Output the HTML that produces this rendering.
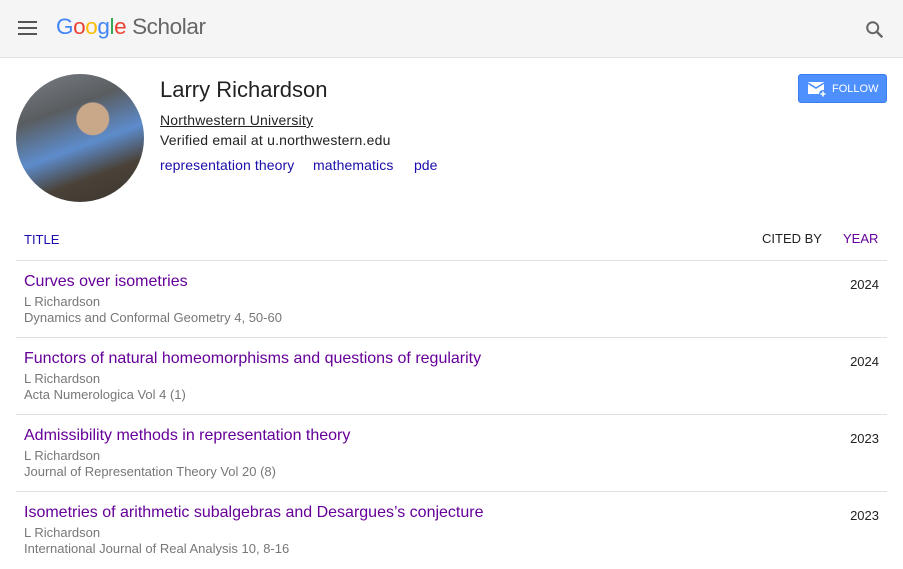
<!DOCTYPE html>
<html><head><meta charset="utf-8"><style>
body{margin:0;width:903px;height:555px;overflow:hidden;background:#fff;font-family:"Liberation Sans",Arial,sans-serif;position:relative}
.hdr{position:absolute;left:0;top:0;width:903px;height:57px;background:#f5f5f5;border-bottom:1px solid #e0e0e0}
.abs{position:absolute;white-space:nowrap}
a{text-decoration:none}
.row{position:absolute;left:16px;width:871px;height:77px;border-top:1px solid #e0e0e0}
.t{position:absolute;left:8px;top:12px;font-size:16px;color:#660099}
.a{position:absolute;left:8px;top:33px;font-size:13px;color:#777}
.v{position:absolute;left:8px;top:49px;font-size:13px;color:#777}
.y{position:absolute;right:8px;top:16px;font-size:13px;color:#222}
</style></head><body>
<div class="hdr">
<div class="abs" style="left:18px;top:21px;width:19px;height:2px;background:#555;box-shadow:0 6px 0 #555,0 12px 0 #555"></div>
<div class="abs" style="left:56px;top:14px;font-size:22.5px;letter-spacing:-0.4px"><span style="color:#4285f4">G</span><span style="color:#ea4335">o</span><span style="color:#fbbc05">o</span><span style="color:#4285f4">g</span><span style="color:#34a853">l</span><span style="color:#ea4335">e</span> <span style="color:#666">Scholar</span></div>
<svg class="abs" style="left:864px;top:19px" width="22" height="22" viewBox="0 0 24 24"><circle cx="9.5" cy="9.5" r="6" fill="none" stroke="#666" stroke-width="2.2"/><path d="M14 14l6 6" stroke="#666" stroke-width="2.6"/></svg>
</div>
<div class="abs" style="left:16px;top:74px;width:128px;height:128px;border-radius:50%;background:radial-gradient(circle at 60% 35%,#c9a88a 0 14%,transparent 15%),linear-gradient(160deg,#7a8088 0%,#5a5d60 30%,#5d8ccc 55%,#4a4238 75%,#3a3530 100%)"></div>
<div class="abs" style="left:160px;top:77px;font-size:22px;color:#222">Larry Richardson</div>
<div class="abs" style="left:160px;top:112px;font-size:14px;color:#222;text-decoration:underline;letter-spacing:0.2px">Northwestern University</div>
<div class="abs" style="left:160px;top:132px;font-size:14px;color:#222;letter-spacing:0.2px">Verified email at u.northwestern.edu</div>
<div class="abs" style="left:160px;top:157px;font-size:14px;color:#1a0dab;letter-spacing:0.1px">representation theory</div>
<div class="abs" style="left:313px;top:157px;font-size:14px;color:#1a0dab;letter-spacing:0.1px">mathematics</div>
<div class="abs" style="left:414px;top:157px;font-size:14px;color:#1a0dab">pde</div>
<div class="abs" style="left:798px;top:74px;width:89px;height:29px;background:#4d90fe;border-radius:3px;border:1px solid #3b7cf0;box-sizing:border-box">
<svg class="abs" style="left:9px;top:7px" width="19" height="16" viewBox="0 0 19 16"><rect x="0" y="0" width="16" height="12" fill="#fff"/><path d="M0 1l8 5 8-5" stroke="#4d90fe" stroke-width="1.6" fill="none"/><circle cx="15" cy="12" r="4" fill="#4d90fe"/><path d="M15 9.5v5M12.5 12h5" stroke="#fff" stroke-width="1.6"/></svg>
<span class="abs" style="left:33px;top:8px;font-size:11px;color:#fff">FOLLOW</span></div>
<div class="abs" style="left:24px;top:232px;font-size:13px;color:#1a0dab">TITLE</div>
<div class="abs" style="left:762px;top:231px;font-size:13px;color:#222">CITED BY</div>
<div class="abs" style="left:843px;top:231px;font-size:13px;color:#660099">YEAR</div>
<div class="row" style="top:260px"><div class="t">Curves over isometries</div><div class="a">L Richardson</div><div class="v">Dynamics and Conformal Geometry 4, 50-60</div><div class="y">2024</div></div>
<div class="row" style="top:337px"><div class="t">Functors of natural homeomorphisms and questions of regularity</div><div class="a">L Richardson</div><div class="v">Acta Numerologica Vol 4 (1)</div><div class="y">2024</div></div>
<div class="row" style="top:414px"><div class="t">Admissibility methods in representation theory</div><div class="a">L Richardson</div><div class="v">Journal of Representation Theory Vol 20 (8)</div><div class="y">2023</div></div>
<div class="row" style="top:491px"><div class="t">Isometries of arithmetic subalgebras and Desargues’s conjecture</div><div class="a">L Richardson</div><div class="v">International Journal of Real Analysis 10, 8-16</div><div class="y">2023</div></div>
</body></html>
